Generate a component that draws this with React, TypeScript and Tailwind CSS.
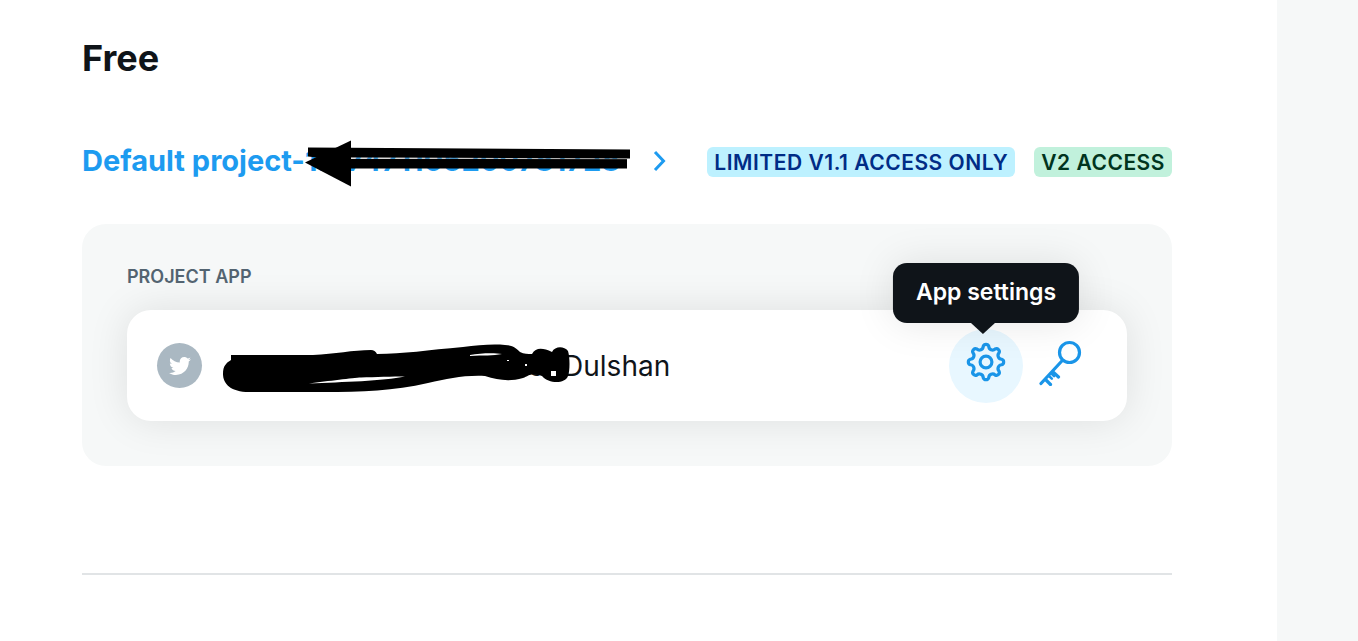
import type { ReactNode } from 'react';
import { FaTwitter } from 'react-icons/fa';

const project = {
  name: 'Default project-1717471105200781728',
  badges: [
    { label: 'LIMITED V1.1 ACCESS ONLY', color: 'bg-[#bdf1ff] text-[#002c86]' },
    { label: 'V2 ACCESS', color: 'bg-[#c1f1dc] text-[#00341e]' },
  ],
  app: '12345678901234567890Dulshan',
};

// closed outline with eight round teeth
function gearPath(teeth: number, radius: number) {
  const step = 360 / teeth;
  const point = (deg: number) => {
    const a = ((deg - 90) * Math.PI) / 180;
    return `${(20 + radius * Math.cos(a)).toFixed(2)} ${(20 + radius * Math.sin(a)).toFixed(2)}`;
  };
  let d = `M${point(-10)}`;
  for (let i = 0; i < teeth; i++) {
    d += `A2.9 2.9 0 0 1 ${point(i * step + 10)}`;
    d += `A3.8 3.8 0 0 0 ${point((i + 1) * step - 10)}`;
  }
  return d + 'Z';
}

function GearIcon() {
  return (
    <svg width="40" height="40" viewBox="0 0 40 40" fill="none" stroke="currentColor" strokeWidth="3.2" strokeLinejoin="round" aria-hidden="true">
      <path d={gearPath(8, 15.9)} />
      <circle cx="20" cy="20" r="5.9" />
    </svg>
  );
}

function KeyIcon() {
  return (
    <svg width="44" height="46" viewBox="0 0 44 46" fill="none" stroke="currentColor" strokeWidth="3.2" strokeLinecap="round" aria-hidden="true">
      <circle cx="31.5" cy="12.5" r="10" />
      <path d="M24.3 20.5L3 43.5M7.500 39.500l5 5M14.500 31.500l6 5.500" />
      <path d="M11 36l2.800 2.600M13.500 33.500l2.600 2.600" strokeWidth="2.6" />
    </svg>
  );
}

function Arrow() {
  return (
    <svg className="absolute -top-px left-[223px] pointer-events-none" width="326" height="48" viewBox="0 0 326 48" aria-hidden="true">
      <path d="M3 7.5L325 9.5V18.5L46 17.5H12L3 16.5z" />
      <path d="M46 19L322 19V28.5H46z" />
      <path d="M46 18L322 19" stroke="#888" strokeWidth="1" opacity="0.5" />
      <path d="M0 22.5L46 0.5v46z" />
    </svg>
  );
}

function Scribble() {
  return (
    <svg className="absolute -top-0.5 left-0 pointer-events-none" width="350" height="52" viewBox="0 0 350 52" aria-hidden="true">
      <path d="M8 13H90C112 12 130 8 148 8Q152 8 154 12C180 12 205 8 240 5C255 3 270 2 282 3C290 3 294 7 297 10C301 12 305 12 309 12C313 5 320 6 329 10C332 4 341 4 345 9C347 16 347 28 345 34C342 42 326 42 319 34C308 30 306 34 300 36C286 40 275 38 262 34C240 33 225 37 205 41C170 49 140 50 100 50H26C8 50 0 42 0 32C0 24 3 21 8 18z" />
      <path d="M86 41.5C105 39 130 36 138 35.500C152 35 170 34.500 182 34.5C160 39 120 40 86 41.5z" fill="#fff" />
      <path d="M247 13C258 11 272 11 279 12C270 14 260 13 247 14z" fill="#fff" />
      <path d="M328 29h5v5h-5zM302 22h2v2h-2zM284 18h2v1h-2z" fill="#fff" />
    </svg>
  );
}

function IconButton({ label, active, children }: { label: string; active?: boolean; children: ReactNode }) {
  return (
    <div className="relative">
      <button
        aria-label={label}
        className={`flex size-[74px] items-center justify-center rounded-full text-[#1a95e8] ${active ? 'bg-[#e8f7ff] pb-2' : 'pb-1.5'}`}
      >
        {children}
      </button>
      {active && (
        <div
          role="tooltip"
          className="absolute bottom-full left-1/2 mb-1.5 flex h-[60px] -translate-x-1/2 items-center rounded-[14px] bg-[#0f1419] px-[23px] text-[23px] font-semibold whitespace-nowrap text-white shadow-[0_0_40px_rgba(0,0,0,0.1)]"
        >
          {label}
          <svg className="absolute top-full left-[78px]" width="24" height="11" viewBox="0 0 24 11" fill="#0f1419" aria-hidden="true">
            <path d="M0 0h24L12 11z" />
          </svg>
        </div>
      )}
    </div>
  );
}

export default function App() {
  return (
    <div className="flex min-h-screen bg-white font-['Inter','Liberation_Sans',sans-serif] text-[#0f1419]">
      <main className="min-w-0 flex-1 pt-9 pr-[105px] pl-[82px]">
        <h1 className="text-[36px] leading-11 font-bold">Free</h1>

        <div className="mt-[61px] flex items-start justify-between">
          <div className="relative">
            <a href="#project" className="flex items-center text-[#1d9bf0]">
              <span className="w-[544px] overflow-hidden text-[29px] leading-10 font-bold whitespace-nowrap">
                {project.name}
              </span>
              <svg className="ml-6" width="20" height="22" viewBox="0 0 20 22" fill="none" stroke="currentColor" strokeWidth="3" aria-hidden="true">
                <path d="M5 2l8.5 9-8.5 9" />
              </svg>
            </a>
            <Arrow />
          </div>
          <div className="mt-1.5 flex gap-[19px]">
            {project.badges.map((badge) => (
              <span
                key={badge.label}
                className={`h-[30px] rounded-md px-[7px] text-[21px] leading-8 font-semibold tracking-wide whitespace-nowrap ${badge.color}`}
              >
                {badge.label}
              </span>
            ))}
          </div>
        </div>

        <section className="mt-[43px] rounded-3xl bg-[#f6f8f8] px-[45px] pt-9 pb-[45px]">
          <h2 className="pt-px text-lg leading-8 font-semibold text-[#536471]">PROJECT APP</h2>
          <div className="mt-[17px] flex h-[111px] items-center rounded-3xl bg-white px-[30px] shadow-[0_0_40px_rgba(0,0,0,0.1)]">
            <span className="flex size-[45px] items-center justify-center rounded-full bg-[#aab8c2] text-white">
              <FaTwitter size={22} />
            </span>
            <div className="relative ml-[21px] flex h-11 items-center pl-2 text-[28px] whitespace-nowrap">
              {project.app}
              <Scribble />
            </div>
            <div className="ml-auto flex">
              <IconButton label="App settings" active>
                <GearIcon />
              </IconButton>
              <IconButton label="Keys and tokens">
                <KeyIcon />
              </IconButton>
            </div>
          </div>
        </section>

        <hr className="mt-[107px] border-t-2 border-[#e1e4e6]" />
      </main>
      <aside className="w-[81px] bg-[#f6f8f8]" />
    </div>
  );
}
